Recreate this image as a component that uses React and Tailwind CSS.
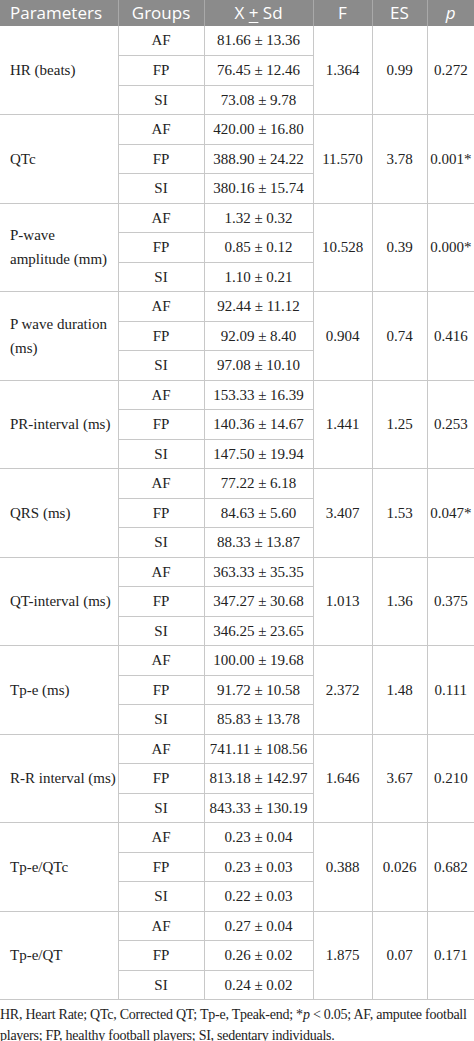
import React from 'react';

const rows = [
  { label: ['HR (beats)'], vals: ['81.66 ± 13.36', '76.45 ± 12.46', '73.08 ± 9.78'], f: '1.364', es: '0.99', p: '0.272' },
  { label: ['QTc'], vals: ['420.00 ± 16.80', '388.90 ± 24.22', '380.16 ± 15.74'], f: '11.570', es: '3.78', p: '0.001*' },
  { label: ['P-wave', 'amplitude (mm)'], vals: ['1.32 ± 0.32', '0.85 ± 0.12', '1.10 ± 0.21'], f: '10.528', es: '0.39', p: '0.000*' },
  { label: ['P wave duration', '(ms)'], vals: ['92.44 ± 11.12', '92.09 ± 8.40', '97.08 ± 10.10'], f: '0.904', es: '0.74', p: '0.416' },
  { label: ['PR-interval (ms)'], vals: ['153.33 ± 16.39', '140.36 ± 14.67', '147.50 ± 19.94'], f: '1.441', es: '1.25', p: '0.253' },
  { label: ['QRS (ms)'], vals: ['77.22 ± 6.18', '84.63 ± 5.60', '88.33 ± 13.87'], f: '3.407', es: '1.53', p: '0.047*' },
  { label: ['QT-interval (ms)'], vals: ['363.33 ± 35.35', '347.27 ± 30.68', '346.25 ± 23.65'], f: '1.013', es: '1.36', p: '0.375' },
  { label: ['Tp-e (ms)'], vals: ['100.00 ± 19.68', '91.72 ± 10.58', '85.83 ± 13.78'], f: '2.372', es: '1.48', p: '0.111' },
  { label: ['R-R interval (ms)'], vals: ['741.11 ± 108.56', '813.18 ± 142.97', '843.33 ± 130.19'], f: '1.646', es: '3.67', p: '0.210' },
  { label: ['Tp-e/QTc'], vals: ['0.23 ± 0.04', '0.23 ± 0.03', '0.22 ± 0.03'], f: '0.388', es: '0.026', p: '0.682' },
  { label: ['Tp-e/QT'], vals: ['0.27 ± 0.04', '0.26 ± 0.02', '0.24 ± 0.02'], f: '1.875', es: '0.07', p: '0.171' },
];

const groups = ['AF', 'FP', 'SI'];

export default function App() {
  return (
    <div className="w-[474px] bg-white text-[#222] font-['Liberation_Serif',serif]">
      <table className="w-[474px] table-fixed border-collapse">
        <colgroup>
          <col className="w-[118px]" />
          <col className="w-[86px]" />
          <col className="w-[109px]" />
          <col className="w-[59px]" />
          <col className="w-[55px]" />
          <col className="w-[47px]" />
        </colgroup>
        <thead>
          <tr className="h-[26px] bg-[#8b8b8b] text-white font-['Open_Sans',sans-serif] text-[17px] leading-[22px]">
            <th className="text-left pl-[10px] font-normal border-r border-[#a9a9a9]">Parameters</th>
            <th className="font-normal border-r border-[#a9a9a9]">Groups</th>
            <th className="font-normal border-r border-[#a9a9a9]">
              X <span className="underline underline-offset-[3px]">+</span> Sd
            </th>
            <th className="font-normal border-r border-[#a9a9a9]">F</th>
            <th className="font-normal border-r border-[#a9a9a9]">ES</th>
            <th className="font-normal italic">p</th>
          </tr>
        </thead>
        <tbody className="text-[15px]">
          {rows.map((r) =>
            groups.map((g, i) => (
              <tr key={r.f + g} className="h-[29.5px]">
                {i === 0 && (
                  <td rowSpan={3} className="text-left pl-[10px] leading-[24px] border-b border-[#c8c8c8]">
                    {r.label.map((l, k) => (
                      <div key={k} className="whitespace-nowrap">{l}</div>
                    ))}
                  </td>
                )}
                <td className="text-center border-l border-r border-b border-[#c8c8c8]">{g}</td>
                <td className="text-center border-r border-b border-[#c8c8c8] whitespace-nowrap">{r.vals[i]}</td>
                {i === 0 && (
                  <>
                    <td rowSpan={3} className="text-center border-r border-b border-[#c8c8c8]">{r.f}</td>
                    <td rowSpan={3} className="text-center border-r border-b border-[#c8c8c8]">{r.es}</td>
                    <td rowSpan={3} className="text-center border-b border-[#c8c8c8] whitespace-nowrap">{r.p}</td>
                  </>
                )}
              </tr>
            ))
          )}
        </tbody>
      </table>
      <p className="text-[14px] leading-[21px] pt-[4px] whitespace-nowrap tracking-[-0.25px]">
        HR, Heart Rate; QTc, Corrected QT; Tp-e, Tpeak-end; *<i>p</i>&nbsp;&lt;&nbsp;0.05; AF, amputee football
        <br />
        players; FP, healthy football players; SI, sedentary individuals.
      </p>
    </div>
  );
}
